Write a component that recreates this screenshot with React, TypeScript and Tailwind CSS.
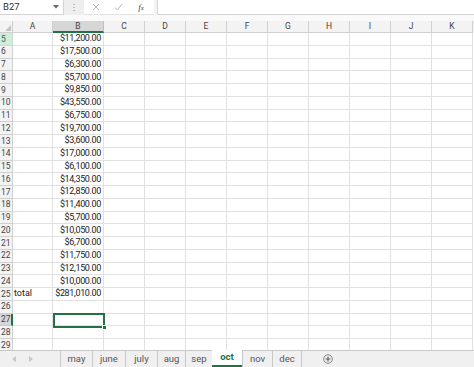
import React from "react";

const data: [number, string, string][] = [
  [5, "", "$11,200.00"],
  [6, "", "$17,500.00"],
  [7, "", "$6,300.00"],
  [8, "", "$5,700.00"],
  [9, "", "$9,850.00"],
  [10, "", "$43,550.00"],
  [11, "", "$6,750.00"],
  [12, "", "$19,700.00"],
  [13, "", "$3,600.00"],
  [14, "", "$17,000.00"],
  [15, "", "$6,100.00"],
  [16, "", "$14,350.00"],
  [17, "", "$12,850.00"],
  [18, "", "$11,400.00"],
  [19, "", "$5,700.00"],
  [20, "", "$10,050.00"],
  [21, "", "$6,700.00"],
  [22, "", "$11,750.00"],
  [23, "", "$12,150.00"],
  [24, "", "$10,000.00"],
  [25, "total", "$281,010.00"],
  [26, "", ""],
  [27, "", ""],
  [28, "", ""],
  [29, "", ""],
];

const cols = ["C", "D", "E", "F", "G", "H", "I", "J", "K"];
const tabs: [string, number][] = [
  ["may", 32],
  ["june", 33],
  ["july", 32],
  ["aug", 28],
  ["sep", 27],
  ["oct", 30],
  ["nov", 30],
  ["dec", 29],
];

const gridCols = "grid grid-cols-[13px_40px_51px_41px_41px_41px_41px_41px_41px_41px_41px_41px]";

export default function App() {
  return (
    <div
      className="w-[474px] h-[367px] overflow-hidden flex flex-col bg-white text-[#222]"
      style={{ fontFamily: "Roboto, 'Noto Sans', sans-serif" }}
    >
      {/* formula bar */}
      <div className="h-[21px] shrink-0 flex items-start bg-[#fafafa]">
        <div className="w-[64px] h-[15px] bg-white border-r border-b border-[#d4d4d4] flex items-center justify-between pl-[3px] pr-[4px]">
          <span className="text-[9.5px] leading-none text-[#333]">B27</span>
          <svg width="6" height="4" viewBox="0 0 6 4">
            <path d="M0 0 L6 0 L3 3.5 Z" fill="#666" />
          </svg>
        </div>
        <div className="w-[20px] h-[15px] bg-[#eeeeee] flex items-center justify-center">
          <div className="flex flex-col gap-[1.5px]">
            <div className="w-[1.5px] h-[1.5px] bg-[#bbb]" />
            <div className="w-[1.5px] h-[1.5px] bg-[#bbb]" />
            <div className="w-[1.5px] h-[1.5px] bg-[#bbb]" />
          </div>
        </div>
        <div className="w-[70px] h-[15px] bg-white border-b border-[#e4e4e4] flex items-center">
          <div className="w-[24px] flex justify-center">
            <svg width="8" height="8" viewBox="0 0 8 8">
              <path d="M1 1 L7 7 M7 1 L1 7" stroke="#b8b8b8" strokeWidth="1" />
            </svg>
          </div>
          <div className="w-[20px] flex justify-center">
            <svg width="9" height="8" viewBox="0 0 9 8">
              <path d="M1 4.5 L3.5 7 L8 1" stroke="#b8b8b8" strokeWidth="1" fill="none" />
            </svg>
          </div>
          <div className="w-[26px] flex justify-center">
            <span
              className="italic text-[9px] leading-none text-[#444]"
              style={{ fontFamily: "'Liberation Serif', serif" }}
            >
              f<span className="text-[7px]">x</span>
            </span>
          </div>
        </div>
        <div className="w-[3px] h-[15px] bg-[#f3f3f3]" />
        <div className="flex-1 h-[15px] bg-white border-l border-b border-[#d4d4d4]" />
      </div>

      {/* column header */}
      <div className={`${gridCols} h-[12px] shrink-0 bg-[#f3f3f3] text-[8.5px] text-[#444]`}>
        <div className="border-r border-b border-[#d0d0d0] relative">
          <svg className="absolute right-[1px] bottom-[1px]" width="6" height="6" viewBox="0 0 6 6">
            <path d="M6 0 L6 6 L0 6 Z" fill="#c4c4c4" />
          </svg>
        </div>
        <div className="border-r border-b border-[#d0d0d0] flex items-center justify-center leading-none">A</div>
        <div className="bg-[#d6d6d6] border-r border-[#c0c0c0] border-b-2 border-b-[#217346] flex items-center justify-center leading-none">
          B
        </div>
        {cols.map((c) => (
          <div key={c} className="border-r border-b border-[#d0d0d0] flex items-center justify-center leading-none">
            {c}
          </div>
        ))}
      </div>

      {/* rows */}
      <div className="flex-1 overflow-hidden relative">
        {data.map(([n, a, b]) => (
          <div key={n} className={`${gridCols} h-[12.75px] text-[9px] leading-none`}>
            <div
              className={`border-r border-b flex items-center pl-[1px] text-[8.5px] ${
                n === 5
                  ? "bg-[#d3ebdc] text-[#217346] border-[#c6dccd]"
                  : n === 27
                  ? "bg-[#d6d6d6] text-[#444] border-r-[#217346] border-b-[#c8c8c8] border-r-2"
                  : "bg-[#f3f3f3] text-[#444] border-[#d0d0d0]"
              }`}
            >
              {n}
            </div>
            <div className="border-r border-b border-[#e1e1e1] flex items-center pl-[1px] text-[#222]">{a}</div>
            <div className="border-r border-b border-[#e1e1e1] flex items-center justify-end pr-[2px] tracking-[-0.35px] text-[#222]">
              {b}
            </div>
            {cols.map((c) => (
              <div key={c} className="border-r border-b border-[#e1e1e1]" />
            ))}
          </div>
        ))}
        {/* selection box B27 */}
        <div className="absolute left-[53px] top-[280px] w-[52px] h-[15px] border-2 border-[#217346]">
          <div className="absolute right-[-4px] bottom-[-4px] w-[5px] h-[5px] bg-[#217346] border border-white" />
        </div>
      </div>

      {/* sheet tabs */}
      <div className="h-[17px] shrink-0 flex bg-[#f0f0f0] border-t border-[#c8c8c8] text-[9.5px] text-[#555]">
        <div className="w-[60px] flex items-center gap-[13px] pl-[12px]">
          <svg width="4" height="6" viewBox="0 0 4 6">
            <path d="M4 0 L0 3 L4 6 Z" fill="#c8c8c8" />
          </svg>
          <svg width="4" height="6" viewBox="0 0 4 6">
            <path d="M0 0 L4 3 L0 6 Z" fill="#c8c8c8" />
          </svg>
        </div>
        {tabs.map(([t, w]) =>
          t === "oct" ? (
            <div
              key={t}
              style={{ width: w }}
              className="bg-white border-b-2 border-[#217346] -mt-[1px] flex items-center justify-center font-bold text-[#217346]"
            >
              {t}
            </div>
          ) : (
            <div
              key={t}
              style={{ width: w }}
              className="border-l border-[#c8c8c8] flex items-center justify-center"
            >
              {t}
            </div>
          )
        )}
        <div className="border-l border-[#c8c8c8] w-[1px]" />
        <div className="w-[52px] flex items-center justify-center">
          <svg width="10" height="10" viewBox="0 0 10 10">
            <circle cx="5" cy="5" r="4.3" fill="none" stroke="#777" strokeWidth="0.9" />
            <path d="M5 2.6 V7.4 M2.6 5 H7.4" stroke="#555" strokeWidth="1.1" />
          </svg>
        </div>
      </div>
    </div>
  );
}
